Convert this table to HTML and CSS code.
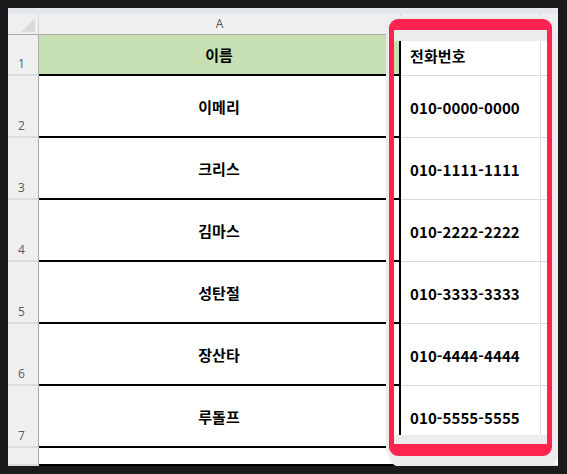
FILE: index.html
```html
<!DOCTYPE html>
<html lang="ko">
<head>
<meta charset="utf-8">
<title>Sheet</title>
<link rel="stylesheet" href="styles.css">
</head>
<body>
<div class="sheet">
  <div class="topbar"></div>
  <div class="grid">
    <div class="corner"><div class="tri"></div></div>
    <div class="colhead colhead-a">A</div>
    <div class="colhead colhead-b">B</div>
    <div class="colhead colhead-c"></div>

    <div class="rowhead r1">1</div>
    <div class="cell a head r1">이름</div>
    <div class="cell b r1">전화번호</div>
    <div class="cell c r1"></div>

    <div class="rowhead">2</div>
    <div class="cell a">이메리</div>
    <div class="cell b">010-0000-0000</div>
    <div class="cell c"></div>

    <div class="rowhead">3</div>
    <div class="cell a">크리스</div>
    <div class="cell b">010-1111-1111</div>
    <div class="cell c"></div>

    <div class="rowhead">4</div>
    <div class="cell a">김마스</div>
    <div class="cell b">010-2222-2222</div>
    <div class="cell c"></div>

    <div class="rowhead">5</div>
    <div class="cell a">성탄절</div>
    <div class="cell b">010-3333-3333</div>
    <div class="cell c"></div>

    <div class="rowhead">6</div>
    <div class="cell a">장산타</div>
    <div class="cell b">010-4444-4444</div>
    <div class="cell c"></div>

    <div class="rowhead">7</div>
    <div class="cell a">루돌프</div>
    <div class="cell b">010-5555-5555</div>
    <div class="cell c"></div>

    <div class="rowhead r8"></div>
    <div class="cell a r8"></div>
    <div class="cell b r8"></div>
    <div class="cell c r8"></div>
  </div>
  <div class="frame"><div class="frame-inner"></div></div>
</div>
</body>
</html>
```

FILE: styles.css
```css
html, body {
  margin: 0;
  padding: 0;
  background: #1b1b1b;
}
body {
  width: 567px;
  height: 474px;
  overflow: hidden;
}
.sheet {
  position: relative;
  margin: 8px;
  width: 550px;
  height: 458px;
  overflow: hidden;
  background: #ffffff;
  font-family: "Noto Sans CJK KR", "Noto Sans", sans-serif;
}
.topbar {
  height: 6px;
  background: #e4e7ec;
}
.grid {
  display: grid;
  grid-template-columns: 31px 362px 140px 17px;
  grid-template-rows: 21px 41px repeat(6, 62px) 18px;
}
.corner {
  background: #efefef;
  border-right: 1px solid #d6d6d6;
  border-bottom: 1px solid #a9a9a9;
  display: flex;
  justify-content: flex-end;
  align-items: flex-end;
  padding: 0 3px 2px 0;
}
.tri {
  width: 14px;
  height: 14px;
  background: #dadada;
  clip-path: polygon(100% 0, 100% 100%, 0 100%);
}
.colhead {
  background: #efefef;
  border-bottom: 1px solid #a9a9a9;
  display: flex;
  justify-content: center;
  align-items: center;
  font-family: "Open Sans", "Noto Sans", sans-serif;
  font-size: 12px;
  color: #555a63;
  padding-bottom: 2px;
}
.colhead-a { border-right: 1px solid #d6d6d6; }
.colhead-b { border-right: 1px solid #d6d6d6; }
.rowhead {
  background: #efefef;
  border-right: 1px solid #a9a9a9;
  border-bottom: 2px solid #dcdcdc;
  display: flex;
  justify-content: center;
  align-items: flex-end;
  padding: 0 3px 3px 0;
  font-family: "Open Sans", "Noto Sans", sans-serif;
  font-size: 12px;
  line-height: 14px;
  color: #555a63;
}
.cell {
  display: flex;
  align-items: center;
  font-size: 15px;
  font-weight: 700;
  color: #000;
}
.cell.a {
  justify-content: center;
  border-right: 2px solid #000;
  border-bottom: 2px solid #000;
}
.cell.a.head {
  background: #c6e0b4;
}
.cell.b {
  padding-left: 9px;
  border-right: 1px solid #dadada;
  border-bottom: 1px solid #dadada;
  padding-top: 1px;
  letter-spacing: 0.1px;
}
.cell.c {
  border-bottom: 1px solid #dadada;
}
.frame {
  position: absolute;
  left: 381px;
  top: 11px;
  width: 163px;
  height: 437px;
  box-sizing: border-box;
  border-style: solid;
  border-color: #ff2450;
  border-width: 11px 5px 12px 5px;
  border-radius: 9px;
  box-shadow: 0 0 0 3px #ececef, 3px 8px 0 3px #ececef;
}
.frame-inner {
  height: 100%;
  box-sizing: border-box;
  border-top: 11px solid #ececef;
  border-bottom: 9px solid #ececef;
}
```
